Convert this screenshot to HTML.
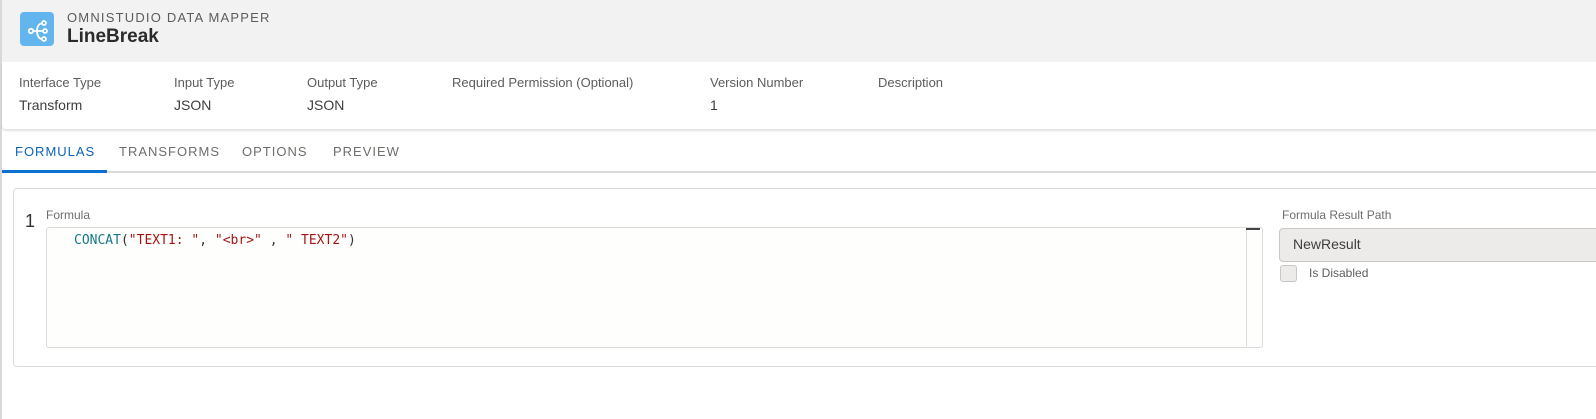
<!DOCTYPE html>
<html><head><style>
body{margin:0;width:1596px;height:419px;overflow:hidden;background:#fff;font-family:"Liberation Sans",sans-serif;position:relative}
.a{position:absolute;white-space:nowrap}
.lbl{font-size:13px;color:#5c5c5c}
.val{font-size:14px;color:#3e3e3c}
.tab{font-size:13px;letter-spacing:1px;color:#706e6b;top:144px}
</style></head><body>
<div class="a" style="left:0;top:0;width:1596px;height:62px;background:#f2f2f2"></div>
<div class="a" style="left:0;top:0;width:2px;height:419px;background:#d8d8d8"></div>
<div class="a" style="left:2px;top:62px;width:1600px;height:67px;background:#fff;box-shadow:0 2px 2px rgba(0,0,0,0.12);border-radius:0 0 4px 4px"></div>
<div class="a" style="left:20px;top:12px;width:34px;height:34px;background:#62b6ed;border-radius:4px">
<svg width="34" height="34" viewBox="0 0 34 34" fill="none" stroke="#fff" stroke-width="1.8">
<circle cx="11" cy="19" r="2.2"/><circle cx="24" cy="11" r="2"/><circle cx="25" cy="19" r="2"/><circle cx="24" cy="27" r="2"/>
<path d="M13.2 19H23M22 11.5c-3 0-5 3-5 7.5s2 8 5 8"/></svg></div>
<div class="a" style="left:67px;top:10px;font-size:13px;letter-spacing:1.2px;color:#5c5c5c">OMNISTUDIO DATA MAPPER</div>
<div class="a" style="left:67px;top:26px;font-size:19px;font-weight:bold;color:#2b2b2b">LineBreak</div>
<div class="a lbl" style="left:19px;top:75px">Interface Type</div>
<div class="a val" style="left:19px;top:97px">Transform</div>
<div class="a lbl" style="left:174px;top:75px">Input Type</div>
<div class="a val" style="left:174px;top:97px">JSON</div>
<div class="a lbl" style="left:307px;top:75px">Output Type</div>
<div class="a val" style="left:307px;top:97px">JSON</div>
<div class="a lbl" style="left:452px;top:75px">Required Permission (Optional)</div>
<div class="a lbl" style="left:710px;top:75px">Version Number</div>
<div class="a val" style="left:710px;top:97px">1</div>
<div class="a lbl" style="left:878px;top:75px">Description</div>
<div class="a tab" style="left:15px;color:#0b64b8">FORMULAS</div>
<div class="a tab" style="left:119px">TRANSFORMS</div>
<div class="a tab" style="left:242px">OPTIONS</div>
<div class="a tab" style="left:333px">PREVIEW</div>
<div class="a" style="left:2px;top:171px;width:1600px;height:2px;background:#dddbda"></div>
<div class="a" style="left:2px;top:170px;width:105px;height:3px;background:#0b70d0"></div>
<div class="a" style="left:13px;top:188px;width:1600px;height:177px;border:1px solid #dddbda;border-radius:4px"></div>
<div class="a" style="left:25px;top:211px;font-size:18px;color:#333">1</div>
<div class="a" style="left:46px;top:208px;font-size:12px;color:#706e6b">Formula</div>
<div class="a" style="left:46px;top:227px;width:1215px;height:119px;border:1px solid #dddbda;border-radius:3px;background:#fefefc"></div>
<div class="a" style="left:1246px;top:228px;width:1px;height:118px;background:#dddbda"></div>
<div class="a" style="left:1246px;top:228px;width:14px;height:2px;background:#444"></div>
<div class="a" style="left:74px;top:233px;font-family:'DejaVu Sans Mono','Liberation Mono',monospace;font-size:13px;color:#a31515"><span style="color:#167a86">CONCAT</span><span style="color:#333">(</span>"TEXT1: "<span style="color:#333">,</span> "&lt;br&gt;" <span style="color:#333">,</span> " TEXT2"<span style="color:#333">)</span></div>
<div class="a" style="left:1282px;top:208px;font-size:12px;color:#706e6b">Formula Result Path</div>
<div class="a" style="left:1279px;top:228px;width:400px;height:32px;background:#ecebea;border:1px solid #c9c7c5;border-radius:4px"></div>
<div class="a" style="left:1293px;top:236px;font-size:14px;color:#3e3e3c">NewResult</div>
<div class="a" style="left:1280px;top:265px;width:15px;height:15px;background:#ecebea;border:1px solid #c9c7c5;border-radius:3px"></div>
<div class="a" style="left:1309px;top:266px;font-size:12px;color:#5c5c5c">Is Disabled</div>
</body></html>
